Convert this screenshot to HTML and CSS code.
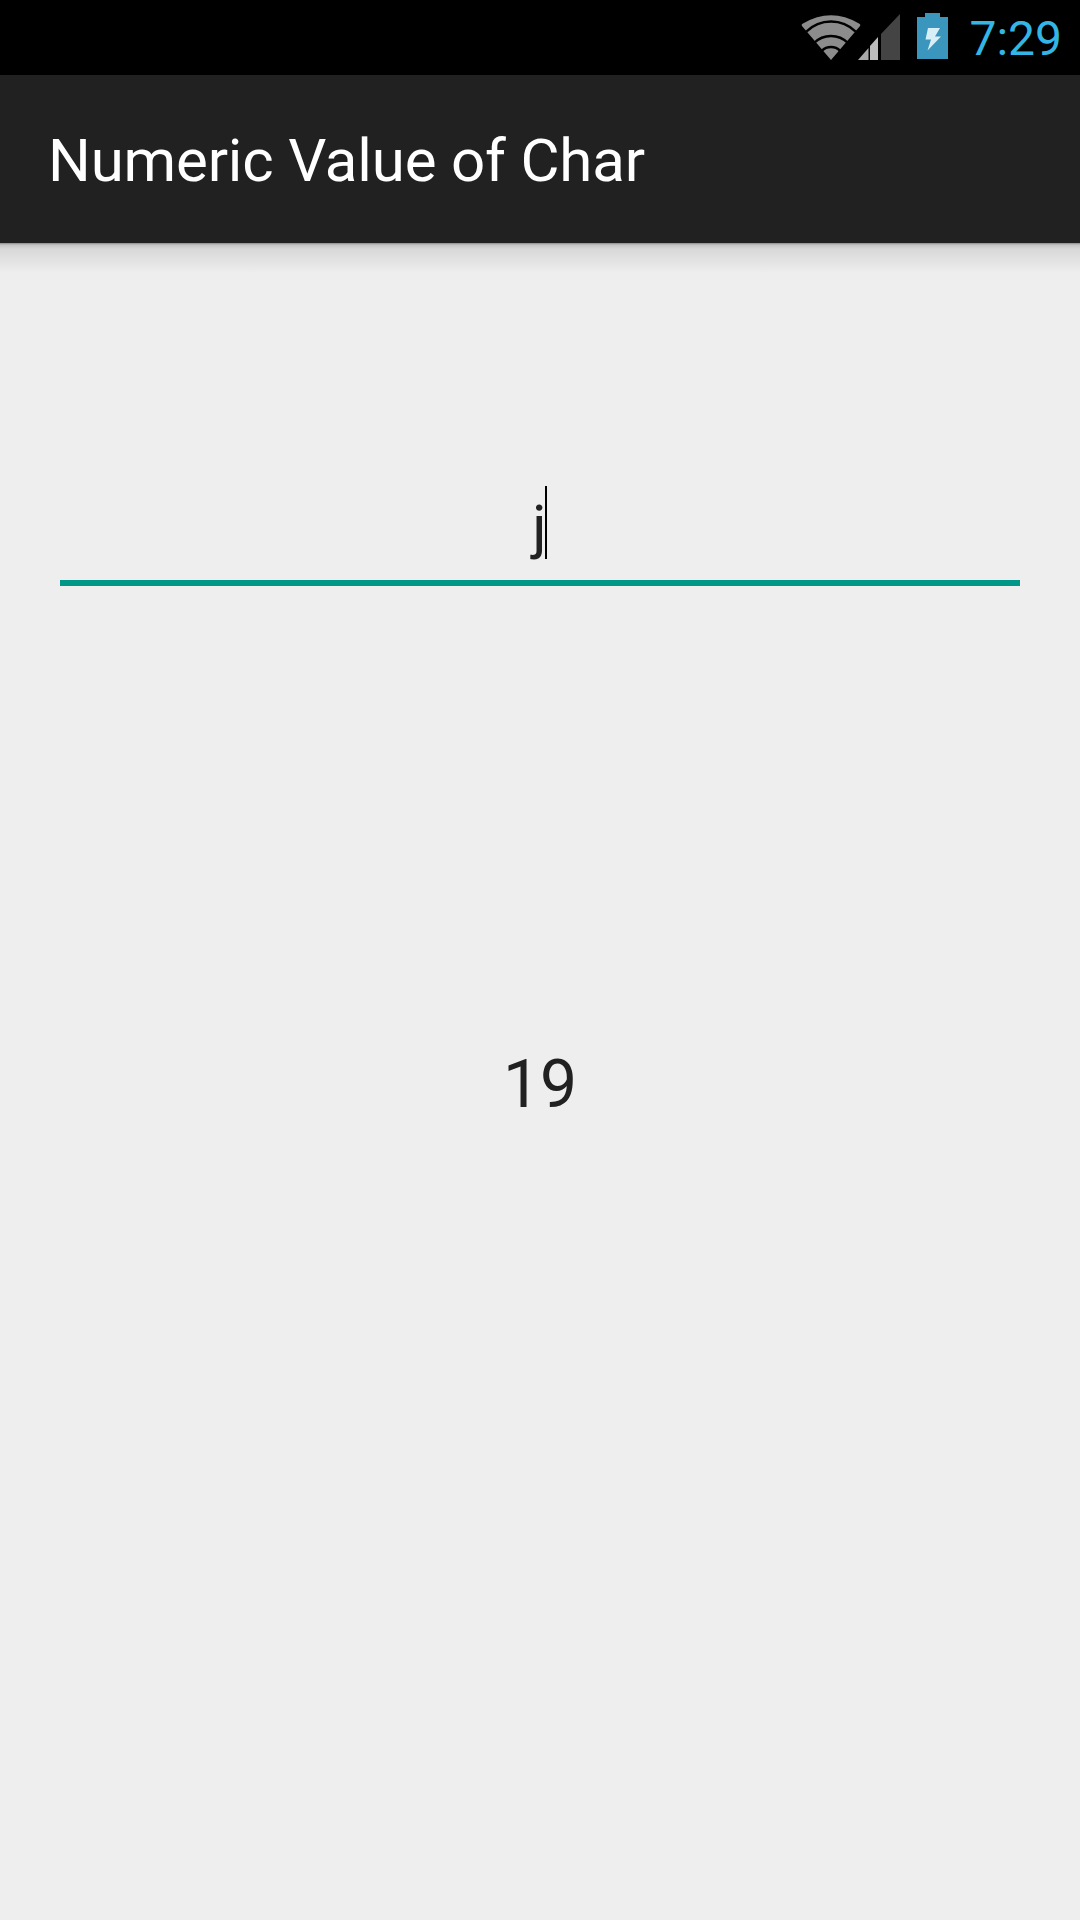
FILE: index.html
```html
<!DOCTYPE html>
<html lang="en">
<head>
    <meta charset="UTF-8">
    <meta name="viewport" content="width=device-width, initial-scale=1.0">
    <title>Numeric Value of Char</title>
    <link rel="stylesheet" href="styles.css">
</head>
<body>
    <div class="status-bar">
        <svg class="icon-wifi" width="60" height="48" viewBox="0 0 60 48">
            <path d="M30 47 L1 13 Q0 11.5 2 10.5 Q30 -6 58 10.5 Q60 11.5 59 13 Z" fill="#8c8c8c"/>
            <g fill="none" stroke="#000" stroke-width="2.4">
                <path d="M5.3 18.7 A35 35 0 0 1 54.7 18.7"/>
                <path d="M13 30 A24 24 0 0 1 47 30"/>
                <path d="M20.8 37.8 A13 13 0 0 1 39.2 37.8"/>
            </g>
        </svg>
        <svg class="icon-signal" width="44" height="48" viewBox="0 0 44 48">
            <polygon points="1,47 11.5,47 11.5,35" fill="#a8a8a8"/>
            <polygon points="13,47 21,47 21,24 13,33" fill="#bcbcbc"/>
            <polygon points="24,47 43,47 43,1 24,21" fill="#444"/>
        </svg>
        <svg class="icon-battery" width="31" height="47" viewBox="0 0 31 47">
            <path d="M8 0 H23 V4 H31 V46 H0 V4 H8 Z" fill="#3a96bd"/>
            <polygon points="11,15 23,15 18,23.5 24,23.5 10.5,37.5 14,26.5 8.5,26.5" fill="#d9eff7"/>
        </svg>
        <span class="clock">7:29</span>
    </div>
    <div class="action-bar">
        <span class="title">Numeric Value of Char</span>
    </div>
    <div class="bar-shadow"></div>
    <div class="content">
        <div class="char-input">
            <span class="char-text">j</span><span class="caret"></span>
        </div>
        <div class="char-value">19</div>
    </div>
</body>
</html>
```

FILE: styles.css
```css
html, body {
    margin: 0;
    height: 100%;
}
body {
    width: 1080px;
    height: 1920px;
    overflow: hidden;
    background-color: #eeeeee;
    font-family: Roboto, "Liberation Sans", sans-serif;
    color: #212121;
}
.status-bar {
    display: flex;
    align-items: flex-start;
    justify-content: flex-end;
    box-sizing: border-box;
    height: 75px;
    padding: 13px 18px 0 0;
    background-color: #000;
}
.icon-wifi {
    margin-right: -4px;
}
.icon-signal {
    margin-right: 16px;
}
.icon-battery {
    margin-right: 21px;
}
.clock {
    margin-top: -2px;
    font-size: 48px;
    line-height: 56px;
    color: #33b5e5;
}
.action-bar {
    display: flex;
    align-items: center;
    box-sizing: border-box;
    height: 168px;
    padding: 2px 0 0 48px;
    background-color: #212121;
}
.title {
    font-size: 60px;
    letter-spacing: -0.17px;
    color: #fff;
}
.bar-shadow {
    height: 30px;
    background: linear-gradient(#8a8a8a 0, #c4c4c4 2px, #d8d8d8 6px, #e1e1e1 16px, #eeeeee 100%);
}
.content {
    padding: 213px 60px 0;
}
.char-input {
    display: flex;
    justify-content: center;
    align-items: flex-start;
    height: 94px;
    padding-right: 1px;
    border-bottom: 6px solid #009688;
}
.char-text {
    font-size: 60px;
    line-height: 70px;
    margin-top: 6px;
}
.caret {
    width: 2px;
    height: 73px;
    margin-left: -2px;
    background-color: #000;
}
.char-value {
    margin-top: 460px;
    text-align: center;
    font-size: 66px;
    line-height: 78px;
}
```
